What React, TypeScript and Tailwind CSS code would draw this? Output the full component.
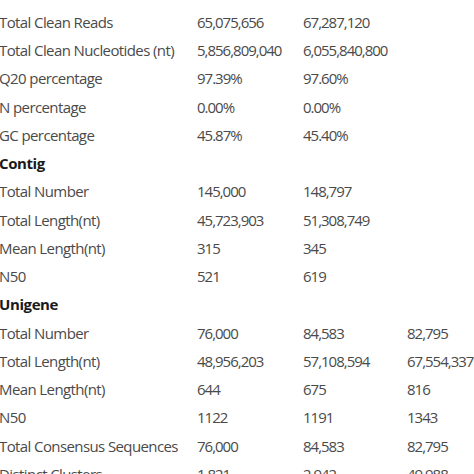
const rows: { label: string; values?: string[]; head?: boolean }[] = [
  { label: "Total Clean Reads", values: ["65,075,656", "67,287,120"] },
  { label: "Total Clean Nucleotides (nt)", values: ["5,856,809,040", "6,055,840,800"] },
  { label: "Q20 percentage", values: ["97.39%", "97.60%"] },
  { label: "N percentage", values: ["0.00%", "0.00%"] },
  { label: "GC percentage", values: ["45.87%", "45.40%"] },
  { label: "Contig", head: true },
  { label: "Total Number", values: ["145,000", "148,797"] },
  { label: "Total Length(nt)", values: ["45,723,903", "51,308,749"] },
  { label: "Mean Length(nt)", values: ["315", "345"] },
  { label: "N50", values: ["521", "619"] },
  { label: "Unigene", head: true },
  { label: "Total Number", values: ["76,000", "84,583", "82,795"] },
  { label: "Total Length(nt)", values: ["48,956,203", "57,108,594", "67,554,337"] },
  { label: "Mean Length(nt)", values: ["644", "675", "816"] },
  { label: "N50", values: ["1122", "1191", "1343"] },
  { label: "Total Consensus Sequences", values: ["76,000", "84,583", "82,795"] },
  { label: "Distinct Clusters", values: ["1,821", "2,942", "49,988"] },
];

export default function App() {
  return (
    <div className="h-[474px] w-[474px] overflow-hidden bg-white font-['Open_Sans',sans-serif] text-[15px] text-[#4a4a4a]">
      <div className="-ml-[1px] pt-[8px]">
        {rows.map((r, i) => (
          <div key={i} className="grid h-[28.25px] grid-cols-[198px_106px_104px_1fr] items-center whitespace-nowrap">
            <div className={r.head ? "font-bold tracking-[-0.4px] text-[#1a1a1a]" : "tracking-[-0.6px]"}>{r.label}</div>
            {(r.values ?? []).map((v, j) => (
              <div key={j} className="tracking-[-1px]">
                {v}
              </div>
            ))}
          </div>
        ))}
      </div>
    </div>
  );
}
